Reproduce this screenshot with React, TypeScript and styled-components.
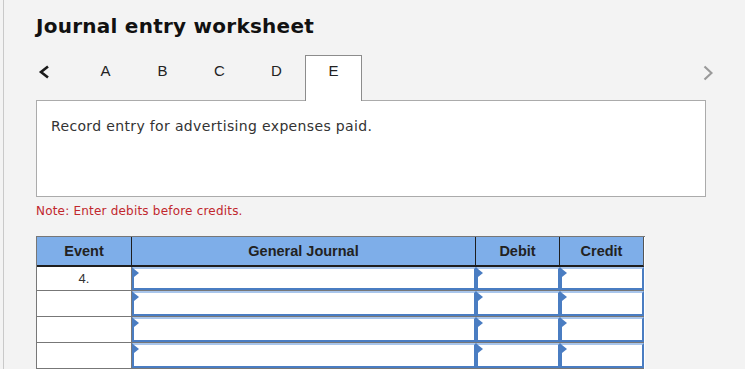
import React from "react";
import styled, { createGlobalStyle } from "styled-components";

const GlobalStyle = createGlobalStyle`
  html, body {
    margin: 0;
    padding: 0;
    background: #f3f3f3;
  }
  body {
    font-family: "DejaVu Sans", Verdana, sans-serif;
  }
`;

const Page = styled.div`
  box-sizing: border-box;
  min-height: 100vh;
  margin-left: 3px;
  border-left: 1px solid #c9c9c9;
  padding: 14px 32px 0 32px;
`;

const Title = styled.h1`
  margin: 0;
  font-size: 20px;
  line-height: 24px;
  font-weight: bold;
  letter-spacing: 0.25px;
  color: #111;
`;

const TabBar = styled.div`
  display: flex;
  align-items: stretch;
  height: 46px;
  margin-top: 17px;
  position: relative;
  z-index: 1;
`;

const ArrowButton = styled.button<{ $side: "left" | "right" }>`
  display: flex;
  align-items: flex-start;
  padding: ${(p) => (p.$side === "left" ? "10px 0 0 2px" : "10px 0 0 0")};
  margin-left: ${(p) => (p.$side === "right" ? "auto" : "0")};
  width: ${(p) => (p.$side === "left" ? "41px" : "10px")};
  background: none;
  border: none;
  cursor: pointer;
`;

const Tab = styled.div<{ $active?: boolean }>`
  box-sizing: border-box;
  width: 57px;
  padding-top: 7px;
  text-align: center;
  font-family: "Liberation Sans", Arial, sans-serif;
  font-size: 15px;
  line-height: 16px;
  color: #222;
  border: 1px solid ${(p) => (p.$active ? "#8c8c8c" : "transparent")};
  border-bottom: none;
  background: ${(p) => (p.$active ? "#fff" : "transparent")};
`;

const Prompt = styled.div`
  box-sizing: border-box;
  width: 670px;
  height: 97px;
  margin-top: -1px;
  padding: 17px 14px 0;
  background: #fff;
  border: 1px solid #ababab;
  font-size: 14px;
  line-height: 17px;
  letter-spacing: 0.35px;
  color: #333;
`;

const Note = styled.div`
  margin-top: 7px;
  font-size: 12px;
  line-height: 15px;
  letter-spacing: 0.2px;
  color: #c1272d;
`;

const Journal = styled.div`
  display: grid;
  grid-template-columns: 95px 344px 84px 84px;
  grid-template-rows: 30px 24px 26px 26px 26px;
  width: 608px;
  margin-top: 17px;
  border-top: 1px solid #777;
  border-left: 1px solid #777;
  background: #fff;
`;

const HeadCell = styled.div<{ $last?: boolean }>`
  box-sizing: border-box;
  display: flex;
  align-items: center;
  justify-content: center;
  background: #7eaee9;
  border-right: 1px solid ${(p) => (p.$last ? "#555" : "#1e1e1e")};
  border-bottom: 2px solid #1e1e1e;
  font-family: "Liberation Sans", Arial, sans-serif;
  font-weight: bold;
  font-size: 14.5px;
  color: #222;
`;

const EventCell = styled.div`
  box-sizing: border-box;
  display: flex;
  align-items: center;
  justify-content: center;
  border-right: 1px solid #777;
  border-bottom: 1px solid #777;
  font-family: "Liberation Sans", Arial, sans-serif;
  font-size: 13px;
  color: #333;
`;

const InputCell = styled.div`
  box-sizing: border-box;
  border-bottom: 1px solid #777;
`;

const Entry = styled.div`
  box-sizing: border-box;
  position: relative;
  height: 100%;
  background: #fff;
  border: 2px solid #4a7dc2;
  border-top: 2px solid #a9c6ec;
`;

const Marker = styled.span`
  position: absolute;
  top: 0;
  left: 0;
  width: 0;
  height: 0;
  border-left: 5px solid #4a7dc2;
  border-top: 4px solid transparent;
  border-bottom: 4px solid transparent;
`;

const ChevronLeft = () => (
  <svg width="12" height="14" viewBox="0 0 12 14">
    <polyline
      points="10,1.5 3,7 10,12.5"
      fill="none"
      stroke="#1a1a1a"
      strokeWidth="2.6"
    />
  </svg>
);

const ChevronRight = () => (
  <svg width="10" height="16" viewBox="0 0 10 16">
    <polyline
      points="1.5,1.5 8.5,8 1.5,14.5"
      fill="none"
      stroke="#9a9a9a"
      strokeWidth="2.2"
    />
  </svg>
);

const tabs = ["A", "B", "C", "D", "E"];
const rows = ["4.", "", "", ""];

export default function App() {
  return (
    <>
      <GlobalStyle />
      <Page>
        <Title>Journal entry worksheet</Title>
        <TabBar>
          <ArrowButton $side="left" aria-label="previous">
            <ChevronLeft />
          </ArrowButton>
          {tabs.map((t) => (
            <Tab key={t} $active={t === "E"}>
              {t}
            </Tab>
          ))}
          <ArrowButton $side="right" aria-label="next">
            <ChevronRight />
          </ArrowButton>
        </TabBar>
        <Prompt>Record entry for advertising expenses paid.</Prompt>
        <Note>Note: Enter debits before credits.</Note>
        <Journal>
          <HeadCell>Event</HeadCell>
          <HeadCell>General Journal</HeadCell>
          <HeadCell>Debit</HeadCell>
          <HeadCell $last>Credit</HeadCell>
          {rows.map((ev, i) => (
            <React.Fragment key={i}>
              <EventCell>{ev}</EventCell>
              {[0, 1, 2].map((c) => (
                <InputCell key={c}>
                  <Entry>
                    <Marker />
                  </Entry>
                </InputCell>
              ))}
            </React.Fragment>
          ))}
        </Journal>
      </Page>
    </>
  );
}
